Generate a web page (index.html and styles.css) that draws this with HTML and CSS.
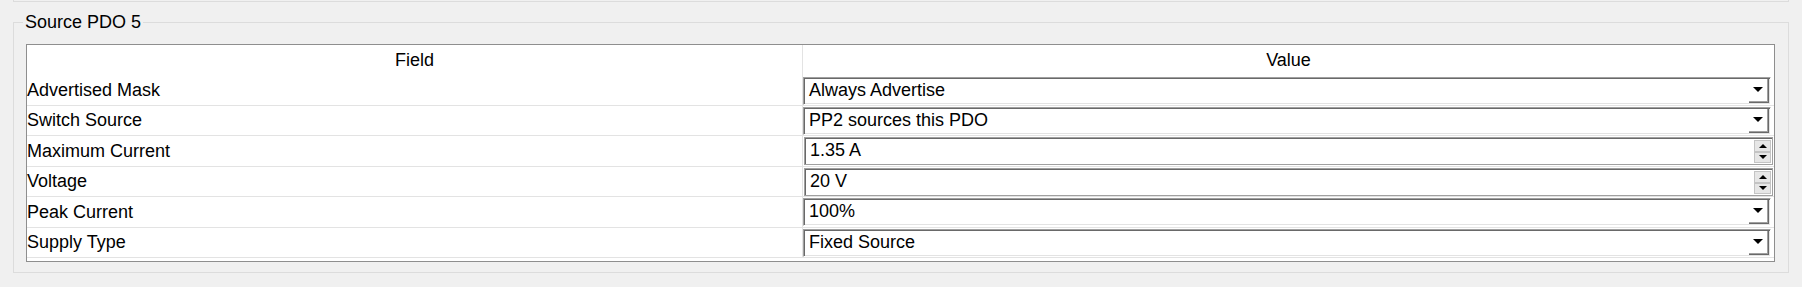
FILE: index.html
```html
<!DOCTYPE html>
<html lang="en">
<head>
  <meta charset="UTF-8" />
  <title>Source PDO 5</title>
  <link rel="stylesheet" href="styles.css">
</head>
<body>
  <div class="prev-group"></div>
  <fieldset class="group">
    <legend>Source PDO 5</legend>
    <div class="grid">
      <div class="head field-col">Field</div>
      <div class="head">Value</div>

      <div class="name">Advertised Mask</div>
      <div class="value">
        <div class="combo"><span class="text">Always Advertise</span><span class="drop"></span></div>
      </div>

      <div class="name">Switch Source</div>
      <div class="value">
        <div class="combo"><span class="text">PP2 sources this PDO</span><span class="drop"></span></div>
      </div>

      <div class="name">Maximum Current</div>
      <div class="value">
        <div class="spin"><span class="text">1.35 A</span><span class="arrows"><span class="up"></span><span class="down"></span></span></div>
      </div>

      <div class="name">Voltage</div>
      <div class="value">
        <div class="spin"><span class="text">20 V</span><span class="arrows"><span class="up"></span><span class="down"></span></span></div>
      </div>

      <div class="name">Peak Current</div>
      <div class="value">
        <div class="combo"><span class="text">100%</span><span class="drop"></span></div>
      </div>

      <div class="name">Supply Type</div>
      <div class="value">
        <div class="combo"><span class="text">Fixed Source</span><span class="drop"></span></div>
      </div>
    </div>
  </fieldset>
</body>
</html>
```

FILE: styles.css
```css
* { margin: 0; padding: 0; box-sizing: border-box; }
body { font-family: "Liberation Sans", Arial, sans-serif; font-size: 18px; color: #000; background: #f0f0f0; }

.prev-group { height: 2px; margin: 0 13px; border: 1px solid #dcdcdc; border-top: none; }

.group { margin: 9px 13px 0; padding: 11px 13px 10px 12px; border: 1px solid #dcdcdc; min-width: 0; }
.group legend { margin-left: -3px; padding: 0 2px; line-height: 22px; }

.grid { display: grid; grid-template-columns: 776px 1fr; grid-template-rows: 31px 30px 30px 31px 30px 31px 30px; background: #fff; border: 1px solid #8e8e8e; padding-bottom: 3px; }
.head { display: flex; align-items: center; justify-content: center; }
.field-col { border-right: 1px solid #e3e3e3; }
.name { display: flex; align-items: center; border-right: 1px solid #e3e3e3; border-bottom: 1px solid #e3e3e3; }
.value { border-bottom: 1px solid #e3e3e3; padding-top: 1px; }

.text { flex: 1; padding-left: 4px; line-height: 23px; }

.combo { display: flex; height: 28px; margin-right: 3px; padding: 1px; border: 1px solid; border-color: #a0a0a0 #fff #fff #a0a0a0; box-shadow: inset 1px 1px 0 #696969, inset -1px -1px 0 #e3e3e3; }
.drop { width: 20px; display: flex; align-items: center; justify-content: center; padding: 0 1px 3px 0; background: #fff; border-right: 1px solid #696969; border-bottom: 1px solid #696969; box-shadow: inset -1px -1px 0 #a0a0a0; }
.drop::after { content: ""; border-left: 5px solid transparent; border-right: 5px solid transparent; border-top: 5px solid #000; }

.spin { display: flex; height: 28px; margin: 0 1px 0 1px; padding: 1px; border: 1px solid #a0a0a0; box-shadow: inset 1px 1px 0 #696969; }
.arrows { width: 17px; display: flex; flex-direction: column; padding-top: 1px; }
.arrows span { flex: 1; display: flex; align-items: center; justify-content: center; background: #e6e6e6; border: 1px solid #c4c4c4; }
.arrows .up::after { content: ""; border-left: 4px solid transparent; border-right: 4px solid transparent; border-bottom: 4px solid #000; }
.arrows .down::after { content: ""; border-left: 4px solid transparent; border-right: 4px solid transparent; border-top: 4px solid #000; }
```
